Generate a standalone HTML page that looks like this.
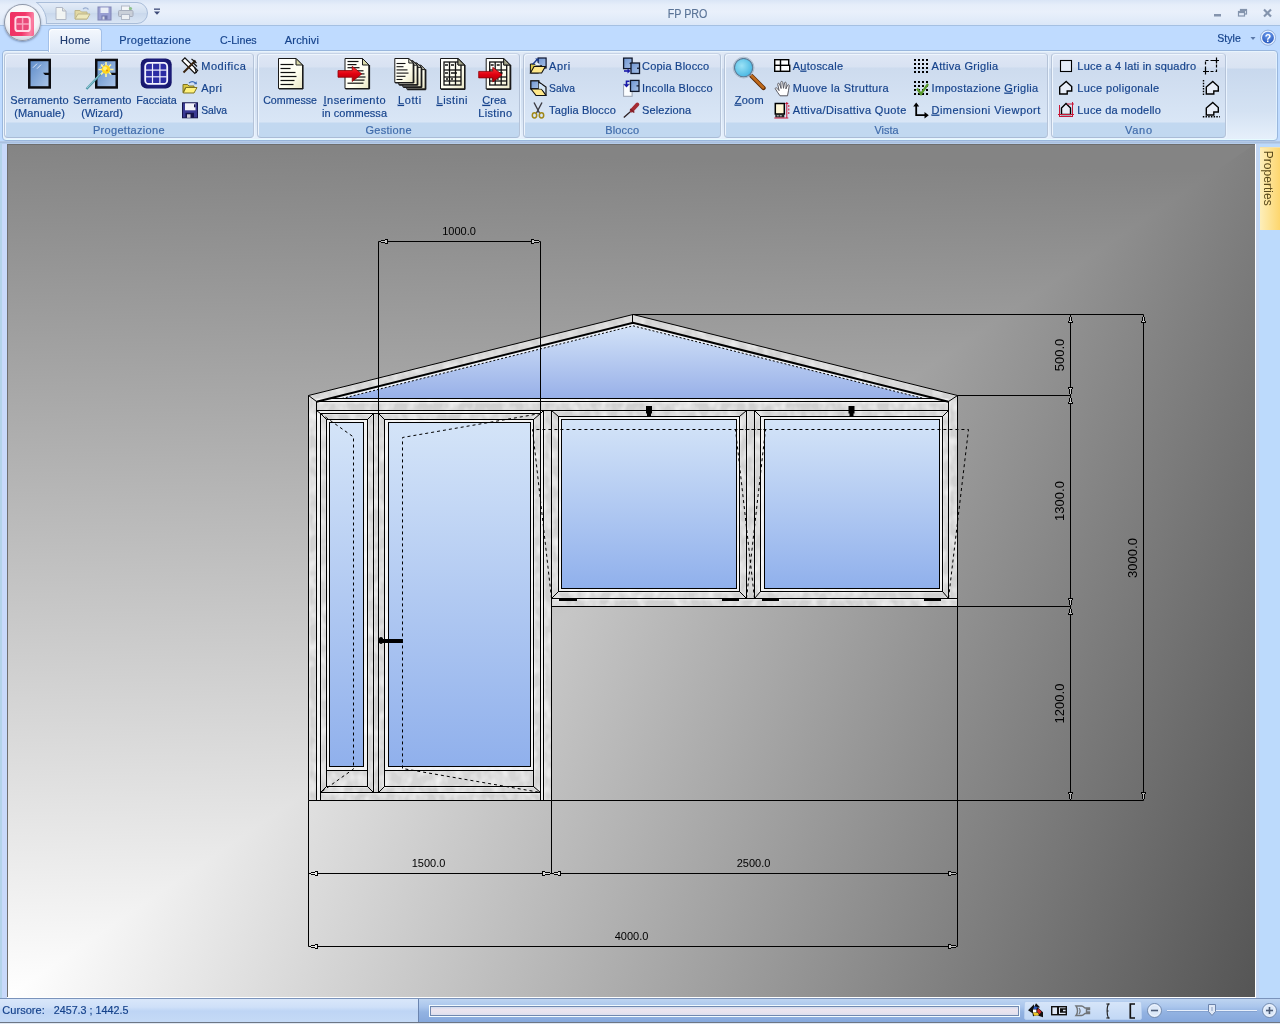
<!DOCTYPE html>
<html><head><meta charset="utf-8"><title>FP PRO</title>
<style>
html,body{margin:0;padding:0}
body{width:1280px;height:1024px;position:relative;overflow:hidden;background:#bfdbff;font-family:"Liberation Sans",sans-serif;font-size:11px;color:#15428b}
div{position:absolute;box-sizing:border-box}
#title{left:0;top:0;width:1280px;height:26px;background:linear-gradient(#d9e5f6 0,#e6eefa 5px,#e9f0fb 12px,#e1ebf9 20px,#dbe7f8 25px);border-bottom:1px solid #a5c0e2}
#tabrow{left:0;top:26px;width:1280px;height:25px;background:#bfdbff}
#qat{left:30px;top:2px;width:118px;height:22px;border:1px solid #a9bdd9;border-radius:0 11px 11px 0;background:linear-gradient(#e4ecf8,#d0deef 50%,#c9d8ec 51%,#d9e5f4)}
#qcw{left:22px;top:2px;width:40px;height:22px;overflow:hidden}
#qc{left:-24.8px;top:-4.8px;width:50px;height:50px;border-radius:50%;border:1px solid #a9bdd9;background:linear-gradient(#d9e5f6 3px,#e6eefa 8px,#e9f0fb 15px,#e1ebf9 23px,#dbe7f8 28px)}
#orb{left:4px;top:4px;width:36.5px;height:36.5px;border-radius:50%;background:radial-gradient(circle at 50% 35%,#ffffff 0,#f2f4f8 55%,#c9cfda 80%,#9aa3b3 100%);box-shadow:0 1px 2px rgba(60,80,120,.55), inset 0 0 0 1px #8e98aa}
#orbi{left:10px;top:12px;width:24px;height:23.6px;border-radius:1.5px;background:linear-gradient(100deg,#ee2f62 0,#f2386a 55%,#fb7fa2 85%,#f9628e 100%)}
#hometab{left:48px;top:28px;width:54px;height:24px;border:1px solid #a3c0e8;border-bottom:none;border-radius:4px 4px 0 0;background:linear-gradient(#f4f8fd,#e6eef9 60%,#dde7f5);box-shadow:inset 1px 1px 0 #fff}
#ribbon{left:2px;top:50px;width:1276px;height:91px;border:1px solid #9ab7dd;border-radius:4px;background:linear-gradient(#e3eefb 0,#dfe8f5 2px,#d9e3f2 17px,#c8d8ed 18px,#d4e2f3 60px,#e6f0fb 88px);box-shadow:inset 0 1px 0 #e8f4fd,inset 1px 0 0 #e8f4fd,inset -1px 0 0 #e0f0fd,inset 0 -1px 0 #e6fbff}
.grp{top:53px;height:85px;border:1px solid #b5c3d8;border-top-color:#c6d3e6;border-bottom-color:#a9bcd6;border-radius:4px;background:linear-gradient(#dfe7f5 0,#d8e2f2 13px,#cddbee 14px,#d9e6f6 68px,#c2d8f0 69px,#c1d8f0 84px);box-shadow:1px 1px 0 #eaf4ff,inset 1px 1px 0 #eef5fd}
#under{left:0;top:141px;width:1280px;height:3px;background:linear-gradient(#b9cde8,#a9c0e0 50%,#bdd3f0)}
#lside{left:0;top:144px;width:7px;height:854px;background:linear-gradient(90deg,#b3d3ea 0,#b3d3ea 2px,#c8d9fa 2px)}
#rside{left:1255px;top:144px;width:25px;height:854px;background:linear-gradient(90deg,#fff 0,#fff 1px,#c3d6f3 1px,#c3d6f3 4px,#bcdafc 4px)}
#prop{left:1260px;top:147px;width:20px;height:83px;background:linear-gradient(90deg,#fdeeba,#fde08c 60%,#fdd66e);border-top:1px solid #f6e2a8}
#cvbot{left:7px;top:997px;width:1249px;height:1px;background:#fff}
#status{left:0;top:998px;width:1280px;height:26px;border-top:1px solid #7a93bb;background:linear-gradient(#d9e7fa 0,#cfe0f8 8px,#bed5f5 12px,#c5daf6 23px,#6d7684 23px,#6d7684 24px,#dfe8f4 24px)}
#status2{left:418px;top:999px;width:862px;height:23px;background:linear-gradient(#bdd4f1 0,#a9c5ec 8px,#93b3e2 13px,#86a8dc 23px);border-left:1px solid #6b85b0}
#prog{left:429px;top:1005px;width:591px;height:12px;border:1px solid #f2fbff;background:linear-gradient(#c8d8ee,#ebe4ef 35%,#e6e2ee 70%,#d4dcee);box-shadow:inset 0 0 0 1px #7088b0}
#sicons{left:1024px;top:1001px;width:118px;height:19px;background:linear-gradient(#d6e5f9,#c2d8f5);border:1px solid #b5cdee;border-radius:2px}
</style></head><body>
<div id="title"></div><div id="tabrow"></div><div id="qat"></div>
<div id="ribbon"></div>
<div id="hometab"></div>
<div class="grp" style="left:4px;width:250px"></div>
<div class="grp" style="left:257px;width:263px"></div>
<div class="grp" style="left:523px;width:198px"></div>
<div class="grp" style="left:724px;width:324px"></div>
<div class="grp" style="left:1051px;width:175px"></div>
<div id="qcw"><div id="qc"></div></div><div id="orb"></div><div id="orbi"></div>
<div id="under"></div><div id="lside"></div><div id="rside"></div><div id="prop"></div>
<div id="cvbot"></div>
<div id="status"></div><div id="status2"></div><div id="prog"></div><div id="sicons"></div>
<svg id="cv" width="1280" height="1024" viewBox="0 0 1280 1024" style="position:absolute;left:0;top:0;will-change:transform">
<defs>
<linearGradient id="bgA" gradientUnits="userSpaceOnUse" x1="7" y1="144" x2="-11.9" y2="996.5"><stop offset="0" stop-color="#848484"/><stop offset="1" stop-color="#ffffff"/></linearGradient>
<linearGradient id="bgB" gradientUnits="userSpaceOnUse" x1="7" y1="997" x2="1104.7" y2="1403.2"><stop offset="0" stop-color="#ffffff"/><stop offset="1" stop-color="#555555"/></linearGradient>
<linearGradient id="gl" x1="0" y1="0" x2="0" y2="1"><stop offset="0" stop-color="#d4e4f8"/><stop offset="1" stop-color="#90b0ec"/></linearGradient>
<linearGradient id="glr" x1="0" y1="0" x2="0" y2="1"><stop offset="0" stop-color="#d2e2f8"/><stop offset="1" stop-color="#98b0e8"/></linearGradient>
<linearGradient id="fv" x1="0" y1="0" x2="1" y2="0"><stop offset="0" stop-color="#e8e8e8"/><stop offset=".35" stop-color="#d0d0d0"/><stop offset="1" stop-color="#d4d4d4"/></linearGradient>
<linearGradient id="fh" x1="0" y1="0" x2="0" y2="1"><stop offset="0" stop-color="#ececec"/><stop offset=".35" stop-color="#d0d0d0"/><stop offset="1" stop-color="#d3d3d3"/></linearGradient>
<filter id="tex" x="0" y="0" width="100%" height="100%" color-interpolation-filters="sRGB">
<feTurbulence type="fractalNoise" baseFrequency="0.11 0.08" numOctaves="2" seed="7" result="n"/>
<feColorMatrix in="n" type="matrix" values="0 0 0 0 1  0 0 0 0 1  0 0 0 0 1  1.35 0 0 0 -0.5" result="m"/>
<feComposite in="m" in2="SourceGraphic" operator="in" result="mm"/>
<feMerge><feMergeNode in="SourceGraphic"/><feMergeNode in="mm"/></feMerge>
</filter>
</defs>
<rect x="7" y="144" width="1248" height="853" fill="url(#bgA)" />
<polygon points="7,997 1255,144 1255,997" fill="url(#bgB)" />
<rect x="1255" y="144" width="1" height="854" fill="#fff" />
<rect x="7" y="997" width="1249" height="1" fill="#fff" />
<rect x="7" y="144" width="1248" height="1" fill="#6e6e6e" />
<rect x="7" y="144" width="1" height="853" fill="#6e6e6e" />
<g filter="url(#tex)">
<polygon points="308.5,395.5 633,314.5 957.5,395.5 948.5,401.5 633,322.5 316.5,401.5" fill="#d2d2d2" />
<polygon points="308.5,395.5 316.5,401.5 551.5,401.5 551.5,800.5 308.5,800.5" fill="#d2d2d2" />
<polygon points="551.5,401.5 948.5,401.5 957.5,395.5 957.5,606.5 551.5,606.5" fill="#d2d2d2" />
<rect x="316.5" y="398.5" width="632" height="3" fill="#f0f0f0" />
<rect x="316.5" y="401.5" width="632" height="9" fill="url(#fh)" />
<polygon points="308.5,395.5 316.5,401.5 316.5,800.5 308.5,800.5" fill="url(#fv)" />
<rect x="316.5" y="410.5" width="4" height="390" fill="#f0f0f0" />
<rect x="540.5" y="410.5" width="3" height="390" fill="#f0f0f0" />
<rect x="543.5" y="410.5" width="8" height="390" fill="url(#fv)" />
<polygon points="957.5,395.5 948.5,401.5 948.5,598.5 957.5,598.5" fill="url(#fv)" />
<rect x="320.5" y="410.5" width="220" height="3" fill="#f0f0f0" />
<rect x="320.5" y="792.5" width="220" height="8" fill="url(#fh)" />
<rect x="551.5" y="598.5" width="406" height="8" fill="url(#fh)" />
<rect x="320.5" y="413.5" width="53" height="379" fill="#d2d2d2" />
<rect x="320.5" y="413.5" width="6" height="379" fill="url(#fv)" />
<rect x="367.5" y="413.5" width="6" height="379" fill="url(#fv)" />
<polygon points="320.5,413.5 373.5,413.5 367.5,419.5 326.5,419.5" fill="url(#fh)" />
<polygon points="320.5,792.5 373.5,792.5 367.5,786.5 326.5,786.5" fill="url(#fh)" />
<rect x="326.5" y="419.5" width="41" height="351" fill="#f0f0f0" />
<rect x="326.5" y="770.5" width="41" height="16" fill="#d6d6d6" />
<rect x="373.5" y="413.5" width="5" height="379" fill="url(#fv)" />
<rect x="378.5" y="413.5" width="162" height="379" fill="#d2d2d2" />
<rect x="378.5" y="413.5" width="6" height="379" fill="url(#fv)" />
<rect x="533.5" y="413.5" width="7" height="379" fill="url(#fv)" />
<polygon points="378.5,413.5 540.5,413.5 533.5,419.5 384.5,419.5" fill="url(#fh)" />
<polygon points="378.5,792.5 540.5,792.5 533.5,786.5 384.5,786.5" fill="url(#fh)" />
<rect x="384.5" y="419.5" width="149" height="351" fill="#f0f0f0" />
<rect x="384.5" y="770.5" width="149" height="16" fill="#d6d6d6" />
<rect x="551.5" y="410.5" width="195" height="188" fill="#d2d2d2" />
<rect x="551.5" y="410.5" width="7" height="188" fill="url(#fv)" />
<rect x="739.5" y="410.5" width="7" height="188" fill="url(#fv)" />
<polygon points="551.5,410.5 746.5,410.5 739.5,416.5 558.5,416.5" fill="url(#fh)" />
<polygon points="551.5,598.5 746.5,598.5 739.5,591.5 558.5,591.5" fill="url(#fh)" />
<rect x="558.5" y="416.5" width="181" height="175" fill="#f0f0f0" />
<rect x="746.5" y="410.5" width="8" height="188" fill="url(#fv)" />
<rect x="754.5" y="410.5" width="194" height="188" fill="#d2d2d2" />
<rect x="754.5" y="410.5" width="6" height="188" fill="url(#fv)" />
<rect x="942.5" y="410.5" width="6" height="188" fill="url(#fv)" />
<polygon points="754.5,410.5 948.5,410.5 942.5,416.5 760.5,416.5" fill="url(#fh)" />
<polygon points="754.5,598.5 948.5,598.5 942.5,591.5 760.5,591.5" fill="url(#fh)" />
<rect x="760.5" y="416.5" width="182" height="175" fill="#f0f0f0" />
</g>
<polygon points="328.5,398.5 633,322.5 936.5,398.5" fill="#eef2f8" />
<polygon points="342,398.5 633,325.8 924,398.5" fill="url(#glr)" />
<rect x="329.5" y="422.5" width="34" height="344" fill="url(#gl)" />
<rect x="388.5" y="422.5" width="142" height="344" fill="url(#gl)" />
<rect x="561.5" y="419.5" width="175" height="169" fill="url(#gl)" />
<rect x="764.5" y="419.5" width="175" height="169" fill="url(#gl)" />
<g stroke="#000" stroke-width="1" fill="none">
<polyline points="308.5,395.5 633,314.5 957.5,395.5" />
<polyline points="316.5,401.8 633,322.8 948.5,401.8" stroke-width="2"/>
<line x1="632.5" y1="314.5" x2="632.5" y2="322.5" />
<line x1="308.5" y1="395.5" x2="316.5" y2="401.5" />
<line x1="957.5" y1="395.5" x2="948.5" y2="401.5" />
<polyline points="342,398.5 633,325.8 924,398.5" stroke-dasharray="2 2"/>
<line x1="330" y1="398.5" x2="935" y2="398.5" />
<line x1="316.5" y1="401.5" x2="948.5" y2="401.5" />
<line x1="316.5" y1="410.5" x2="948.5" y2="410.5" />
<line x1="308.5" y1="395.5" x2="308.5" y2="800.5" />
<line x1="316.5" y1="401.5" x2="316.5" y2="800.5" />
<line x1="320.5" y1="413.5" x2="320.5" y2="800.5" />
<line x1="316.5" y1="410.5" x2="320.5" y2="413.5" />
<line x1="543.5" y1="410.5" x2="540.5" y2="413.5" />
<line x1="320.5" y1="413.5" x2="540.5" y2="413.5" />
<line x1="540.5" y1="413.5" x2="540.5" y2="800.5" />
<line x1="543.5" y1="410.5" x2="543.5" y2="800.5" />
<line x1="551.5" y1="410.5" x2="551.5" y2="800.5" />
<line x1="948.5" y1="401.5" x2="948.5" y2="598.5" />
<line x1="957.5" y1="395.5" x2="957.5" y2="606.5" />
<line x1="308.5" y1="800.5" x2="551.5" y2="800.5" />
<line x1="320.5" y1="792.5" x2="540.5" y2="792.5" />
<line x1="551.5" y1="598.5" x2="957.5" y2="598.5" />
<line x1="551.5" y1="606.5" x2="957.5" y2="606.5" />
<rect x="320.5" y="413.5" width="53" height="379"/>
<rect x="326.5" y="419.5" width="41" height="367"/>
<rect x="329.5" y="422.5" width="34" height="344"/>
<line x1="326.5" y1="770.5" x2="367.5" y2="770.5" />
<line x1="320.5" y1="413.5" x2="326.5" y2="419.5" />
<line x1="373.5" y1="413.5" x2="367.5" y2="419.5" />
<line x1="320.5" y1="792.5" x2="326.5" y2="786.5" />
<line x1="373.5" y1="792.5" x2="367.5" y2="786.5" />
<rect x="378.5" y="413.5" width="162" height="379"/>
<rect x="384.5" y="419.5" width="149" height="367"/>
<rect x="388.5" y="422.5" width="142" height="344"/>
<line x1="384.5" y1="770.5" x2="533.5" y2="770.5" />
<line x1="378.5" y1="413.5" x2="384.5" y2="419.5" />
<line x1="540.5" y1="413.5" x2="533.5" y2="419.5" />
<line x1="378.5" y1="792.5" x2="384.5" y2="786.5" />
<line x1="540.5" y1="792.5" x2="533.5" y2="786.5" />
<rect x="551.5" y="410.5" width="195" height="188"/>
<rect x="558.5" y="416.5" width="181" height="175"/>
<rect x="561.5" y="419.5" width="175" height="169"/>
<line x1="551.5" y1="410.5" x2="558.5" y2="416.5" />
<line x1="746.5" y1="410.5" x2="739.5" y2="416.5" />
<line x1="551.5" y1="598.5" x2="558.5" y2="591.5" />
<line x1="746.5" y1="598.5" x2="739.5" y2="591.5" />
<rect x="754.5" y="410.5" width="194" height="188"/>
<rect x="760.5" y="416.5" width="182" height="175"/>
<rect x="764.5" y="419.5" width="175" height="169"/>
<line x1="754.5" y1="410.5" x2="760.5" y2="416.5" />
<line x1="948.5" y1="410.5" x2="942.5" y2="416.5" />
<line x1="754.5" y1="598.5" x2="760.5" y2="591.5" />
<line x1="948.5" y1="598.5" x2="942.5" y2="591.5" />
<polyline points="320.5,413.5 353.5,437 353.5,769 320.5,792.5" stroke-dasharray="3 3"/>
<polyline points="540.5,413.5 402.5,437.5 402.5,768.5 540.5,792.5" stroke-dasharray="3 3"/>
<polyline points="551.5,598.5 532.5,429.5 765.5,429.5 746.5,598.5" stroke-dasharray="3 3"/>
<polyline points="754.5,598.5 735.5,429.5 968.5,429.5 948.5,598.5" stroke-dasharray="3 3"/>
<line x1="378.5" y1="241.5" x2="378.5" y2="792.5" />
<line x1="540.5" y1="241.5" x2="540.5" y2="792.5" />
<line x1="378.5" y1="241.5" x2="540.5" y2="241.5" />
<line x1="308.5" y1="800.5" x2="308.5" y2="946.5" />
<line x1="551.5" y1="800.5" x2="551.5" y2="873.5" />
<line x1="957.5" y1="606.5" x2="957.5" y2="946.5" />
<line x1="308.5" y1="873.5" x2="957.5" y2="873.5" />
<line x1="308.5" y1="946.5" x2="957.5" y2="946.5" />
<line x1="633" y1="314.5" x2="1143.5" y2="314.5" />
<line x1="957.5" y1="395.5" x2="1070.5" y2="395.5" />
<line x1="957.5" y1="606.5" x2="1070.5" y2="606.5" />
<line x1="551.5" y1="800.5" x2="1143.5" y2="800.5" />
<line x1="1070.5" y1="314.5" x2="1070.5" y2="800.5" />
<line x1="1143.5" y1="314.5" x2="1143.5" y2="800.5" />
</g>
<g stroke="#000" stroke-width="1" shape-rendering="crispEdges">
<path fill="#c7c7c7" d="M380.5,240.5 L384.5,240.5 L385.5,239.5 L387.5,239.5 L387.5,243.5 L385.5,243.5 L384.5,242.5 L380.5,242.5"/>
<path fill="#c7c7c7" d="M538.5,240.5 L534.5,240.5 L533.5,239.5 L531.5,239.5 L531.5,243.5 L533.5,243.5 L534.5,242.5 L538.5,242.5"/>
<path fill="#ededed" d="M310.5,872.5 L314.5,872.5 L315.5,871.5 L317.5,871.5 L317.5,875.5 L315.5,875.5 L314.5,874.5 L310.5,874.5"/>
<path fill="#dddddd" d="M549.5,872.5 L545.5,872.5 L544.5,871.5 L542.5,871.5 L542.5,875.5 L544.5,875.5 L545.5,874.5 L549.5,874.5"/>
<path fill="#dddddd" d="M553.5,872.5 L557.5,872.5 L558.5,871.5 L560.5,871.5 L560.5,875.5 L558.5,875.5 L557.5,874.5 L553.5,874.5"/>
<path fill="#c1c1c1" d="M955.5,872.5 L951.5,872.5 L950.5,871.5 L948.5,871.5 L948.5,875.5 L950.5,875.5 L951.5,874.5 L955.5,874.5"/>
<path fill="#ebebeb" d="M310.5,945.5 L314.5,945.5 L315.5,944.5 L317.5,944.5 L317.5,948.5 L315.5,948.5 L314.5,947.5 L310.5,947.5"/>
<path fill="#bfbfbf" d="M955.5,945.5 L951.5,945.5 L950.5,944.5 L948.5,944.5 L948.5,948.5 L950.5,948.5 L951.5,947.5 L955.5,947.5"/>
<path fill="#c7c7c7" d="M1069.5,316.5 L1069.5,320.5 L1068.5,321.5 L1068.5,322.5 L1072.5,322.5 L1072.5,321.5 L1071.5,320.5 L1071.5,316.5"/>
<path fill="#c5c5c5" d="M1069.5,393.5 L1069.5,389.5 L1068.5,388.5 L1068.5,387.5 L1072.5,387.5 L1072.5,388.5 L1071.5,389.5 L1071.5,393.5"/>
<path fill="#c5c5c5" d="M1069.5,397.5 L1069.5,401.5 L1068.5,402.5 L1068.5,403.5 L1072.5,403.5 L1072.5,402.5 L1071.5,401.5 L1071.5,397.5"/>
<path fill="#c0c0c0" d="M1069.5,604.5 L1069.5,600.5 L1068.5,599.5 L1068.5,598.5 L1072.5,598.5 L1072.5,599.5 L1071.5,600.5 L1071.5,604.5"/>
<path fill="#c0c0c0" d="M1069.5,608.5 L1069.5,612.5 L1068.5,613.5 L1068.5,614.5 L1072.5,614.5 L1072.5,613.5 L1071.5,612.5 L1071.5,608.5"/>
<path fill="#bbbbbb" d="M1069.5,798.5 L1069.5,794.5 L1068.5,793.5 L1068.5,792.5 L1072.5,792.5 L1072.5,793.5 L1071.5,794.5 L1071.5,798.5"/>
<path fill="#c2c2c2" d="M1142.5,316.5 L1142.5,320.5 L1141.5,321.5 L1141.5,322.5 L1145.5,322.5 L1145.5,321.5 L1144.5,320.5 L1144.5,316.5"/>
<path fill="#b6b6b6" d="M1142.5,798.5 L1142.5,794.5 L1141.5,793.5 L1141.5,792.5 L1145.5,792.5 L1145.5,793.5 L1144.5,794.5 L1144.5,798.5"/>
</g>
<g fill="#000">
<rect x="559" y="599" width="18" height="2" fill="#000" />
<rect x="722" y="599" width="17" height="2" fill="#000" />
<rect x="762" y="599" width="17" height="2" fill="#000" />
<rect x="924" y="599" width="17" height="2" fill="#000" />
<rect x="646" y="406" width="6" height="7.5" fill="#000" />
<rect x="647" y="413" width="4" height="3" fill="#000" />
<rect x="848.5" y="406" width="6" height="7.5" fill="#000" />
<rect x="849.5" y="413" width="4" height="3" fill="#000" />
<rect x="379" y="639" width="24" height="4" fill="#000" />
<ellipse cx="381" cy="640.5" rx="2.2" ry="3.4"/>
</g>
<g font-family="Liberation Sans, sans-serif" fill="#000" font-size="11px" text-anchor="middle">
<text x="459" y="235">1000.0</text>
<text x="428.5" y="867">1500.0</text>
<text x="753.5" y="867">2500.0</text>
<text x="631.5" y="940">4000.0</text>
</g>
<g font-family="Liberation Sans, sans-serif" fill="#000" font-size="13px" text-anchor="middle">
<text transform="translate(1064,355) rotate(-90)">500.0</text>
<text transform="translate(1064,501) rotate(-90)">1300.0</text>
<text transform="translate(1064,703.5) rotate(-90)">1200.0</text>
<text transform="translate(1137,558) rotate(-90)">3000.0</text>
</g>
</svg>
<svg id="ch" width="1280" height="1024" viewBox="0 0 1280 1024" style="position:absolute;left:0;top:0;will-change:transform" font-family="Liberation Sans, sans-serif">
<defs>
<linearGradient id="wg" x1="0" y1="0" x2="1" y2="1"><stop offset="0" stop-color="#5f8cc9"/><stop offset="1" stop-color="#a9c4e8"/></linearGradient>
<linearGradient id="docg" x1="0" y1="0" x2="1" y2="1"><stop offset="0" stop-color="#ffffff"/><stop offset=".6" stop-color="#fffff0"/><stop offset="1" stop-color="#e9e6c4"/></linearGradient>
<radialGradient id="navy" cx=".5" cy=".5" r=".7"><stop offset="0" stop-color="#3434b4"/><stop offset="1" stop-color="#10105c"/></radialGradient>
<linearGradient id="redg" x1="0" y1="0" x2="0" y2="1"><stop offset="0" stop-color="#ff3a3a"/><stop offset=".5" stop-color="#e00010"/><stop offset="1" stop-color="#a80008"/></linearGradient>
<radialGradient id="lens" cx=".4" cy=".4" r=".7"><stop offset="0" stop-color="#9be2f6"/><stop offset="1" stop-color="#3fb2e0"/></radialGradient>
<linearGradient id="bw" x1="0" y1="0" x2="1" y2="1"><stop offset="0" stop-color="#6f95d2"/><stop offset="1" stop-color="#a6c0e6"/></linearGradient>
<radialGradient id="helpg" cx=".5" cy=".3" r=".8"><stop offset="0" stop-color="#6fa0f0"/><stop offset="1" stop-color="#1a48b0"/></radialGradient>
</defs>
<text x="667.7" y="18" font-size="12px" fill="#5c7598" stroke="#5c7598" stroke-width=".18" textLength="39.7" lengthAdjust="spacingAndGlyphs" >FP PRO</text>
<rect x="1214" y="14" width="7" height="2.5" fill="#8494ad"/>
<g fill="none" stroke="#8494ad" stroke-width="1.2"><rect x="1240.5" y="9.5" width="6" height="4.5"/><rect x="1238.5" y="11.5" width="6" height="4.5" fill="#e4ecf9"/><line x1="1238" y1="12.2" x2="1245" y2="12.2" stroke-width="1.8"/><line x1="1240" y1="10.2" x2="1247" y2="10.2" stroke-width="1.8"/></g>
<g stroke="#8494ad" stroke-width="2.2" stroke-linecap="butt"><line x1="1264" y1="9.5" x2="1271" y2="16.5"/><line x1="1271" y1="9.5" x2="1264" y2="16.5"/></g>
<g opacity=".8">
<g transform="translate(55.5,7)"><path d="M0.5,0.5 H7 L10.5,4 V12.5 H0.5 Z" fill="#fbfbf4" stroke="#a8aebc"/><path d="M7,0.5 V4 H10.5" fill="#e6e6d8" stroke="#a8aebc"/></g>
<g transform="translate(74,6.5)"><path d="M1,4 H6 L7.5,5.5 H13 V12.5 H1 Z" fill="#e8d890" stroke="#b8aa70"/><path d="M1,12.5 L4,7.5 H16 L13,12.5 Z" fill="#f6ecb0" stroke="#b8aa70"/><path d="M9,2.5 Q12,0 14.5,3" fill="none" stroke="#8aa0c8" stroke-width="1.2"/></g>
<g transform="translate(97.5,6.5)"><rect x="0.5" y="0.5" width="13" height="13" fill="#8c90cc" stroke="#6c70a8"/><rect x="3" y="1" width="8" height="5.5" fill="#eef0f8"/><rect x="4" y="9" width="6" height="4" fill="#5c609c"/><rect x="5" y="10" width="2" height="3" fill="#d8dae8"/></g>
<g transform="translate(118,5.5)"><rect x="3.5" y="0.5" width="8" height="5" fill="#fafafa" stroke="#a8aebc"/><rect x="0.5" y="5" width="14.5" height="6" rx="1" fill="#c8ccd4" stroke="#9ca2b0"/><rect x="3.5" y="9" width="8" height="5" fill="#f4f4f4" stroke="#a8aebc"/><circle cx="12.5" cy="3" r="1.6" fill="#7ab870"/></g>
</g>
<rect x="154" y="8.5" width="6" height="1.3" fill="#3c4a78"/><path d="M154,11.5 h6 l-3,3.3 z" fill="#3c4a78"/>
<rect x="16.4" y="18" width="12.6" height="12" fill="#ea4a7a"/><g fill="none"><rect x="15.4" y="17.1" width="14.4" height="13.9" rx="2.6" stroke="#ffdbe6" stroke-width="2"/><path d="M22.6,18 V30 M16.4,24 H29" stroke="#f9a4be" stroke-width="1.5"/></g>
<text x="60" y="43.7" font-size="11px" fill="#1e3a6e" stroke="#1e3a6e" stroke-width=".18" textLength="30.2" lengthAdjust="spacing" >Home</text>
<text x="119.2" y="43.7" font-size="11px" fill="#15428b" stroke="#15428b" stroke-width=".18" textLength="71.7" lengthAdjust="spacing" >Progettazione</text>
<text x="219.9" y="43.7" font-size="11px" fill="#15428b" stroke="#15428b" stroke-width=".18" textLength="36.8" lengthAdjust="spacingAndGlyphs" >C-Lines</text>
<text x="284.8" y="43.7" font-size="11px" fill="#15428b" stroke="#15428b" stroke-width=".18" textLength="34.1" lengthAdjust="spacing" >Archivi</text>
<text x="1217.3" y="41.5" font-size="11px" fill="#15428b" stroke="#15428b" stroke-width=".18" textLength="23.5" lengthAdjust="spacingAndGlyphs" >Style</text>
<path d="M1250.5,37 h5 l-2.5,3 z" fill="#5a78a8"/>
<circle cx="1268" cy="37.7" r="6.6" fill="url(#helpg)" stroke="#e8f2ff" stroke-width="1.4"/><circle cx="1268" cy="37.7" r="7.6" fill="none" stroke="#8aa4d0" stroke-width=".8"/>
<text x="1268" y="41.6" font-size="10.5px" font-weight="bold" fill="#fff" text-anchor="middle">?</text>
<g transform="translate(28,58.7)"><rect x="0" y="0" width="23" height="30" fill="#0c0c10"/><rect x="2.5" y="2.5" width="18" height="25" fill="url(#wg)"/><path d="M5,9 l4,-4 M9,10 l4,-4" stroke="#dce8f8" stroke-width="1"/><path d="M15,14 h8 v2.2 h-6 z" fill="#0c0c10"/></g>
<g transform="translate(95,58.7)"><rect x="0" y="0" width="23" height="30" fill="#0c0c10"/><rect x="2.5" y="2.5" width="18" height="25" fill="url(#wg)"/><path d="M5,9 l4,-4 M9,10 l4,-4" stroke="#dce8f8" stroke-width="1"/><path d="M15,14 h8 v2.2 h-6 z" fill="#0c0c10"/></g>
<line x1="86.5" y1="89" x2="102" y2="72.5" stroke="#4f98a8" stroke-width="2.2"/><line x1="87" y1="88" x2="102" y2="72" stroke="#a8dce4" stroke-width=".8"/>
<g stroke="#fff6a0" stroke-width="1.6"><line x1="106" y1="62" x2="106" y2="77"/><line x1="98.5" y1="69.5" x2="113.5" y2="69.5"/><line x1="101" y1="64.5" x2="111" y2="74.5"/><line x1="111" y1="64.5" x2="101" y2="74.5"/></g><circle cx="106" cy="69.5" r="4.2" fill="#ffd61a"/><circle cx="105" cy="68.5" r="2" fill="#fff07a"/><circle cx="107" cy="70.5" r="1" fill="#e08a10"/>
<text x="10.2" y="103.9" font-size="11px" fill="#15428b" stroke="#15428b" stroke-width=".18" textLength="58.3" lengthAdjust="spacing" >Serramento</text>
<text x="14.2" y="116.6" font-size="11px" fill="#15428b" stroke="#15428b" stroke-width=".18" textLength="50.8" lengthAdjust="spacing" >(Manuale)</text>
<text x="73.1" y="103.9" font-size="11px" fill="#15428b" stroke="#15428b" stroke-width=".18" textLength="58.3" lengthAdjust="spacing" >Serramento</text>
<text x="81.3" y="116.6" font-size="11px" fill="#15428b" stroke="#15428b" stroke-width=".18" textLength="41.6" lengthAdjust="spacing" >(Wizard)</text>
<g transform="translate(140.7,58.4)"><rect x="0" y="0" width="31" height="30" rx="6" fill="url(#navy)"/><rect x="4.5" y="4.5" width="22" height="21" rx="3.5" fill="#2c2ca4" stroke="#f4f4ff" stroke-width="1.8"/><g stroke="#f0f0ff" stroke-width="1.2"><line x1="11.8" y1="5" x2="11.8" y2="25"/><line x1="19.2" y1="5" x2="19.2" y2="25"/><line x1="5" y1="11.7" x2="26" y2="11.7"/><line x1="5" y1="18.4" x2="26" y2="18.4"/></g></g>
<text x="136.2" y="103.9" font-size="11px" fill="#15428b" stroke="#15428b" stroke-width=".18" textLength="40.6" lengthAdjust="spacingAndGlyphs" >Facciata</text>
<g transform="translate(182.5,58)"><g transform="rotate(45 7 8)"><rect x="-2" y="5.5" width="18" height="4" fill="#fff" stroke="#111" stroke-width="1.2"/></g><line x1="1" y1="14.5" x2="13" y2="2.5" stroke="#3a2410" stroke-width="2"/><path d="M9,1 l5,4 M11,5 l3.5,3.5 M12,9 l2,6" stroke="#111" stroke-width="1.1" fill="none"/></g>
<text x="201.2" y="69.8" font-size="11px" fill="#15428b" stroke="#15428b" stroke-width=".18" textLength="44.7" lengthAdjust="spacing" >Modifica</text>
<g transform="translate(182.5,81.5)"><path d="M0.5,3 H5 L6.5,4.5 H11.5 V6 H3 L0.5,11 Z" fill="#d9c640" stroke="#7f7420" stroke-width="1"/><path d="M0.8,11.5 L3.5,6 H14.5 L11.5,11.5 Z" fill="#fff27c" stroke="#7f7420" stroke-width="1"/><path d="M6.5,1.5 Q10,-1.5 13,1.8" fill="none" stroke="#3c6cb8" stroke-width="1.3"/><path d="M11.5,2.8 l3,0 l-0.6,-3 z" fill="#3c6cb8"/></g>
<text x="201.2" y="91.7" font-size="11px" fill="#15428b" stroke="#15428b" stroke-width=".18" textLength="20.8" lengthAdjust="spacing" >Apri</text>
<g transform="translate(182,102.3)"><rect x="0.5" y="0.5" width="15" height="15" fill="#3a3a94" stroke="#15154c"/><rect x="3" y="1" width="10.5" height="7" fill="#f2f2f8"/><rect x="12" y="2" width="1.5" height="3" fill="#15154c"/><rect x="3.5" y="10.5" width="8.5" height="5" fill="#15154c"/><rect x="5" y="12" width="3.5" height="3.5" fill="#d0d0d8"/></g>
<text x="201.2" y="113.5" font-size="11px" fill="#15428b" stroke="#15428b" stroke-width=".18" textLength="25.9" lengthAdjust="spacingAndGlyphs" >Salva</text>
<text x="92.9" y="133.8" font-size="11px" fill="#3e6aaa" stroke="#3e6aaa" stroke-width=".18" textLength="71.7" lengthAdjust="spacing" >Progettazione</text>
<g transform="translate(278,58)"><path d="M0.5,0.5 H18 L24.5,7 V30.5 H0.5 Z" fill="url(#docg)" stroke="#1a1a1a" stroke-width="1"/><path d="M24.8,7 V31 M1,30.8 H25" stroke="#1a1a1a" stroke-width="1.6" fill="none"/><path d="M18,0.5 V7 H24.5 Z" fill="#d9d9a8" stroke="#1a1a1a" stroke-width="1"/></g>
<g stroke="#111" stroke-width="1.2">
<line x1="280.5" y1="64.5" x2="293.5" y2="64.5"/>
<line x1="280.5" y1="68.5" x2="290.5" y2="68.5"/>
<line x1="280.5" y1="72.5" x2="295.5" y2="72.5"/>
<line x1="280.5" y1="76.5" x2="296.5" y2="76.5"/>
<line x1="280.5" y1="80.5" x2="294.5" y2="80.5"/>
<line x1="280.5" y1="84.5" x2="293.5" y2="84.5"/>
</g>
<text x="263.2" y="103.9" font-size="11px" fill="#15428b" stroke="#15428b" stroke-width=".18" textLength="53.8" lengthAdjust="spacingAndGlyphs" >Commesse</text>
<g transform="translate(344.5,58)"><path d="M0.5,0.5 H18 L24.5,7 V30.5 H0.5 Z" fill="url(#docg)" stroke="#1a1a1a" stroke-width="1"/><path d="M24.8,7 V31 M1,30.8 H25" stroke="#1a1a1a" stroke-width="1.6" fill="none"/><path d="M18,0.5 V7 H24.5 Z" fill="#d9d9a8" stroke="#1a1a1a" stroke-width="1"/></g>
<g stroke="#111" stroke-width="1.2">
<line x1="347.5" y1="61.5" x2="358.5" y2="61.5"/>
<line x1="347.5" y1="64.6" x2="356.5" y2="64.6"/>
<line x1="347.5" y1="67.7" x2="359.5" y2="67.7"/>
<line x1="356.5" y1="70.8" x2="363.5" y2="70.8"/>
<line x1="358.5" y1="73.9" x2="364.5" y2="73.9"/>
<line x1="356.5" y1="77" x2="365.5" y2="77"/>
<line x1="353.5" y1="80.1" x2="364.5" y2="80.1"/>
<line x1="347.5" y1="83.2" x2="363.5" y2="83.2"/>
</g>
<g transform="translate(338,66.3)"><path d="M0,4.256 H14.22 V0 L23.7,7.6 L14.22,15.2 V10.944 H0 Z" fill="url(#redg)" stroke="#8c0008" stroke-width=".8"/></g>
<text x="323.6" y="103.9" font-size="11px" fill="#15428b" stroke="#15428b" stroke-width=".18" textLength="61.9" lengthAdjust="spacing" ><tspan text-decoration="underline">I</tspan>nserimento</text>
<text x="322.1" y="116.6" font-size="11px" fill="#15428b" stroke="#15428b" stroke-width=".18" textLength="64.9" lengthAdjust="spacing" >in commessa</text>
<g transform="translate(406.3,64.6)"><path d="M0.5,0.5 H14.5 L19,5 V24.5 H0.5 Z" fill="url(#docg)" stroke="#1a1a1a" stroke-width="1"/><path d="M19.3,5 V25 M1,24.8 H19.5" stroke="#1a1a1a" stroke-width="1.6" fill="none"/><path d="M14.5,0.5 V5 H19 Z" fill="#eeeedc" stroke="#1a1a1a" stroke-width="1"/></g>
<g transform="translate(402.3,62.4)"><path d="M0.5,0.5 H14.5 L19,5 V24.5 H0.5 Z" fill="url(#docg)" stroke="#1a1a1a" stroke-width="1"/><path d="M19.3,5 V25 M1,24.8 H19.5" stroke="#1a1a1a" stroke-width="1.6" fill="none"/><path d="M14.5,0.5 V5 H19 Z" fill="#eeeedc" stroke="#1a1a1a" stroke-width="1"/></g>
<g transform="translate(398.3,60.2)"><path d="M0.5,0.5 H14.5 L19,5 V24.5 H0.5 Z" fill="url(#docg)" stroke="#1a1a1a" stroke-width="1"/><path d="M19.3,5 V25 M1,24.8 H19.5" stroke="#1a1a1a" stroke-width="1.6" fill="none"/><path d="M14.5,0.5 V5 H19 Z" fill="#eeeedc" stroke="#1a1a1a" stroke-width="1"/></g>
<g transform="translate(394.3,58)"><path d="M0.5,0.5 H14.5 L19,5 V24.5 H0.5 Z" fill="url(#docg)" stroke="#1a1a1a" stroke-width="1"/><path d="M19.3,5 V25 M1,24.8 H19.5" stroke="#1a1a1a" stroke-width="1.6" fill="none"/><path d="M14.5,0.5 V5 H19 Z" fill="#eeeedc" stroke="#1a1a1a" stroke-width="1"/></g>
<g stroke="#111" stroke-width="1.1">
<line x1="396.5" y1="63.5" x2="405.5" y2="63.5"/>
<line x1="396.5" y1="66.7" x2="403.5" y2="66.7"/>
<line x1="396.5" y1="69.9" x2="407.5" y2="69.9"/>
<line x1="396.5" y1="73.1" x2="408.5" y2="73.1"/>
<line x1="396.5" y1="76.3" x2="405.5" y2="76.3"/>
<line x1="396.5" y1="79.5" x2="402.5" y2="79.5"/>
</g>
<text x="397.9" y="103.9" font-size="11px" fill="#15428b" stroke="#15428b" stroke-width=".18" textLength="23.3" lengthAdjust="spacing" ><tspan text-decoration="underline">L</tspan>otti</text>
<g transform="translate(440,58)"><path d="M0.5,0.5 H18 L24.5,7 V31 H0.5 Z" fill="url(#docg)" stroke="#1a1a1a" stroke-width="1"/><path d="M24.8,7 V31.5 M1,31.3 H25" stroke="#1a1a1a" stroke-width="1.6" fill="none"/><path d="M18,0.5 V7 H24.5 Z" fill="#a4a488" stroke="#1a1a1a" stroke-width="1"/></g>
<g transform="translate(440,58)"><g stroke="#111" stroke-width="1.3" fill="none"><rect x="4" y="4" width="17" height="23"/><line x1="9.5" y1="4" x2="9.5" y2="27"/><line x1="15.5" y1="4" x2="15.5" y2="27"/><line x1="4" y1="12" x2="21" y2="12"/><line x1="4" y1="19" x2="21" y2="19"/><line x1="4" y1="23" x2="21" y2="23"/><path d="M5,7 h3 M11,7 h3 M5,15 h3 M11,15 h6 M6,21 h2 M11,21 h2"/></g><path d="M18,0.5 V7 H24.5 Z" fill="#a4a488" stroke="#1a1a1a"/></g>
<text x="436.6" y="103.9" font-size="11px" fill="#15428b" stroke="#15428b" stroke-width=".18" textLength="30.9" lengthAdjust="spacing" ><tspan text-decoration="underline">L</tspan>istini</text>
<g transform="translate(485.7,58)"><path d="M0.5,0.5 H18 L24.5,7 V31 H0.5 Z" fill="url(#docg)" stroke="#1a1a1a" stroke-width="1"/><path d="M24.8,7 V31.5 M1,31.3 H25" stroke="#1a1a1a" stroke-width="1.6" fill="none"/><path d="M18,0.5 V7 H24.5 Z" fill="#a4a488" stroke="#1a1a1a" stroke-width="1"/></g>
<g transform="translate(485.7,58)"><g stroke="#111" stroke-width="1.3" fill="none"><rect x="4" y="4" width="17" height="23"/><line x1="9.5" y1="4" x2="9.5" y2="27"/><line x1="15.5" y1="4" x2="15.5" y2="27"/><line x1="4" y1="12" x2="21" y2="12"/><line x1="4" y1="19" x2="21" y2="19"/><line x1="4" y1="23" x2="21" y2="23"/><path d="M5,7 h3 M11,7 h3 M5,15 h3 M11,15 h6 M6,21 h2 M11,21 h2"/></g><path d="M18,0.5 V7 H24.5 Z" fill="#a4a488" stroke="#1a1a1a"/></g>
<g transform="translate(478.7,67.3)"><path d="M0,4.116 H14.1 V0 L23.5,7.35 L14.1,14.7 V10.584 H0 Z" fill="url(#redg)" stroke="#8c0008" stroke-width=".8"/></g>
<text x="482.3" y="103.9" font-size="11px" fill="#15428b" stroke="#15428b" stroke-width=".18" textLength="23.9" lengthAdjust="spacing" ><tspan text-decoration="underline">C</tspan>rea</text>
<text x="478.2" y="116.6" font-size="11px" fill="#15428b" stroke="#15428b" stroke-width=".18" textLength="33.8" lengthAdjust="spacing" >Listino</text>
<text x="365.5" y="133.8" font-size="11px" fill="#3e6aaa" stroke="#3e6aaa" stroke-width=".18" textLength="46" lengthAdjust="spacing" >Gestione</text>
<g transform="translate(529.6,57.5)"><rect x="8.5" y="0.5" width="8" height="10" fill="url(#bw)" stroke="#0c1430" stroke-width="1.2"/><path d="M0.8,6.5 H5 L6,8 H12 L9,15.5 H0.8 Z" fill="#d8c850" stroke="#111" stroke-width="1"/><path d="M0.8,15.5 L4.5,9 H15.8 L12,15.5 Z" fill="#ffe88a" stroke="#111" stroke-width="1.1"/><path d="M3,7 L8,1.5" stroke="#1c3c8c" stroke-width="1.4"/><path d="M5.5,1 h3.5 v3.5 z" fill="#1c3c8c"/><path d="M5,8 l3,-3 l3,3 z" fill="#e8f4ff"/></g>
<text x="549.1" y="69.6" font-size="11px" fill="#15428b" stroke="#15428b" stroke-width=".18" textLength="21" lengthAdjust="spacing" >Apri</text>
<g transform="translate(530,80)"><rect x="0.8" y="0.8" width="8" height="8" fill="url(#bw)" stroke="#111" stroke-width="1.3"/><path d="M8.8,2 L16,7 V15 " fill="none" stroke="#111" stroke-width="1.2"/><path d="M1,9 L6,15.5 H16 L11.5,9 Z" fill="#ffe88a" stroke="#111" stroke-width="1.2"/><path d="M8.8,3 L15,8 v4 l-3.5,-3.2 H8.8 Z" fill="#d8e8f4"/><circle cx="10.5" cy="5.8" r="1.6" fill="#cfe6ff"/></g>
<text x="549.1" y="91.6" font-size="11px" fill="#15428b" stroke="#15428b" stroke-width=".18" textLength="25.9" lengthAdjust="spacingAndGlyphs" >Salva</text>
<g transform="translate(530,102)"><path d="M4,0.5 L9.5,11 M12,0.5 L6.5,11" stroke="#3c3c44" stroke-width="1.4" fill="none"/><ellipse cx="4.5" cy="13.3" rx="2.2" ry="2.6" fill="none" stroke="#a08818" stroke-width="1.5"/><ellipse cx="11.5" cy="13.3" rx="2.2" ry="2.6" fill="none" stroke="#a08818" stroke-width="1.5"/></g>
<text x="549.1" y="113.7" font-size="11px" fill="#15428b" stroke="#15428b" stroke-width=".18" textLength="66.7" lengthAdjust="spacing" >Taglia Blocco</text>
<g transform="translate(623,57.5)"><rect x="0.6" y="0.6" width="8.5" height="10.5" fill="url(#bw)" stroke="#10182c" stroke-width="1.3"/><path d="M9.1,5.85 h-2.5" stroke="#10182c" stroke-width="1.2"/><rect x="8" y="5.5" width="8.5" height="10.5" fill="url(#bw)" stroke="#10182c" stroke-width="1.3"/><path d="M16.5,10.75 h-2.5" stroke="#10182c" stroke-width="1.2"/><path d="M1,13.5 h5" stroke="#1818a8" stroke-width="1.6"/><path d="M4.5,11 l3,2.5 l-3,2.5 z" fill="#1818a8"/></g>
<text x="642" y="69.6" font-size="11px" fill="#15428b" stroke="#15428b" stroke-width=".18" textLength="67.2" lengthAdjust="spacing" >Copia Blocco</text>
<g transform="translate(623,79.8)"><rect x="0.6" y="4.5" width="8.5" height="12" fill="#fbfdff" stroke="#98a0b0" stroke-width="1"/><rect x="7.5" y="0.6" width="8.5" height="11" fill="url(#bw)" stroke="#10182c" stroke-width="1.3"/><path d="M16,6.1 h-2.5" stroke="#10182c" stroke-width="1.2"/><path d="M6.5,1.5 h-3 v4" stroke="#1818a8" stroke-width="1.6" fill="none"/><path d="M0.5,4.5 h6 l-3,3.2 z" fill="#1818a8"/></g>
<text x="642" y="91.6" font-size="11px" fill="#15428b" stroke="#15428b" stroke-width=".18" textLength="70.7" lengthAdjust="spacing" >Incolla Blocco</text>
<g transform="translate(623.3,102)"><line x1="0.5" y1="15.5" x2="9" y2="8" stroke="#2c2024" stroke-width="1.3"/><line x1="8.5" y1="8.5" x2="14" y2="2.5" stroke="#a42c34" stroke-width="4" stroke-linecap="round"/><line x1="7" y1="7" x2="11" y2="10.5" stroke="#7c2028" stroke-width="1.6"/></g>
<text x="642" y="113.7" font-size="11px" fill="#15428b" stroke="#15428b" stroke-width=".18" textLength="49.1" lengthAdjust="spacing" >Seleziona</text>
<text x="605.2" y="133.8" font-size="11px" fill="#3e6aaa" stroke="#3e6aaa" stroke-width=".18" textLength="33.8" lengthAdjust="spacing" >Blocco</text>
<line x1="751.5" y1="76" x2="763.5" y2="88" stroke="#5c2c08" stroke-width="4.4" stroke-linecap="round"/><line x1="751.8" y1="76" x2="763.2" y2="87.5" stroke="#c06a1c" stroke-width="2.6" stroke-linecap="round"/>
<circle cx="743.6" cy="67.6" r="9.2" fill="url(#lens)" stroke="#5c7c98" stroke-width="1.3"/><circle cx="743.6" cy="67.6" r="10.4" fill="none" stroke="#a8b8c8" stroke-width=".9"/>
<text x="734.7" y="103.7" font-size="11px" fill="#15428b" stroke="#15428b" stroke-width=".18" textLength="29" lengthAdjust="spacing" ><tspan text-decoration="underline">Z</tspan>oom</text>
<g transform="translate(774,59)"><rect x="0.7" y="0.7" width="14" height="6" fill="#fff" stroke="#000" stroke-width="1.4"/><rect x="0.7" y="6.3" width="15" height="6" fill="#fff" stroke="#000" stroke-width="1.4"/><line x1="6.5" y1="0.7" x2="6.5" y2="12.3" stroke="#000" stroke-width="1.4"/></g>
<text x="792.8" y="69.7" font-size="11px" fill="#15428b" stroke="#15428b" stroke-width=".18" textLength="50.2" lengthAdjust="spacing" >A<tspan text-decoration="underline">u</tspan>toscale</text>
<g transform="translate(774.5,80.3)"><path d="M5.5,15.5 C4,13 2,11 0.8,8.5 C0.5,7.5 1.8,7 2.6,8 L4.6,10.3 L3.2,4 C3,2.8 4.6,2.5 5,3.6 L6.6,8.2 L6.3,2 C6.3,0.8 8,0.8 8.2,2 L9,8 L10,2.6 C10.2,1.5 11.8,1.7 11.7,2.9 L11.4,8.6 L13,5 C13.5,4 15,4.4 14.7,5.6 C14,9 14,12 13,15.5 Z" fill="#fff" stroke="#585860" stroke-width="1"/></g>
<text x="792.8" y="91.7" font-size="11px" fill="#15428b" stroke="#15428b" stroke-width=".18" textLength="95.9" lengthAdjust="spacing" >Muove la Struttura</text>
<g transform="translate(774.3,102)"><rect x="1" y="1.5" width="9" height="10.5" fill="#fff8d8" stroke="#000" stroke-width="1.5"/><rect x="1" y="12" width="9" height="3.5" fill="#222"/><path d="M2.5,13.8 h2 M5.5,13.8 h2" stroke="#ddd" stroke-width="1"/><g stroke="#c81838" stroke-width="1"><line x1="12.5" y1="0" x2="12.5" y2="16"/><line x1="0" y1="16" x2="14" y2="16"/><line x1="14.5" y1="3" x2="14.5" y2="12" stroke-dasharray="2 1.5"/><line x1="11" y1="1.5" x2="14" y2="1.5"/></g></g>
<text x="792.8" y="113.7" font-size="11px" fill="#15428b" stroke="#15428b" stroke-width=".18" textLength="113.5" lengthAdjust="spacing" >Attiva/Disattiva Quote</text>
<g fill="#000"><rect x="914" y="59" width="2" height="2"/><rect x="914" y="63" width="2" height="2"/><rect x="914" y="67" width="2" height="2"/><rect x="914" y="71" width="2" height="2"/><rect x="918" y="59" width="2" height="2"/><rect x="918" y="63" width="2" height="2"/><rect x="918" y="67" width="2" height="2"/><rect x="918" y="71" width="2" height="2"/><rect x="922" y="59" width="2" height="2"/><rect x="922" y="63" width="2" height="2"/><rect x="922" y="67" width="2" height="2"/><rect x="922" y="71" width="2" height="2"/><rect x="926" y="59" width="2" height="2"/><rect x="926" y="63" width="2" height="2"/><rect x="926" y="67" width="2" height="2"/><rect x="926" y="71" width="2" height="2"/></g>
<text x="931.5" y="69.7" font-size="11px" fill="#15428b" stroke="#15428b" stroke-width=".18" textLength="66.7" lengthAdjust="spacing" >Attiva Griglia</text>
<g fill="#000"><rect x="914" y="81" width="2" height="2"/><rect x="914" y="85" width="2" height="2"/><rect x="914" y="89" width="2" height="2"/><rect x="914" y="93" width="2" height="2"/><rect x="918" y="81" width="2" height="2"/><rect x="918" y="85" width="2" height="2"/><rect x="918" y="89" width="2" height="2"/><rect x="918" y="93" width="2" height="2"/><rect x="922" y="81" width="2" height="2"/><rect x="922" y="85" width="2" height="2"/><rect x="922" y="89" width="2" height="2"/><rect x="922" y="93" width="2" height="2"/><rect x="926" y="81" width="2" height="2"/><rect x="926" y="85" width="2" height="2"/><rect x="926" y="89" width="2" height="2"/><rect x="926" y="93" width="2" height="2"/></g>
<path d="M917,88.5 L921,94 L928,84" fill="none" stroke="#5a9a2c" stroke-width="2.2"/>
<text x="931.5" y="91.7" font-size="11px" fill="#15428b" stroke="#15428b" stroke-width=".18" textLength="106.7" lengthAdjust="spacing" >Impostazione <tspan text-decoration="underline">G</tspan>riglia</text>
<path d="M916.2,104 V115.2 H927" fill="none" stroke="#000" stroke-width="1.8"/><path d="M913.2,106.5 L916.2,102.5 L919.2,106.5 Z M924.5,112 L928.8,115.2 L924.5,118.4 Z" fill="#000"/>
<text x="931.5" y="113.7" font-size="11px" fill="#15428b" stroke="#15428b" stroke-width=".18" textLength="108.8" lengthAdjust="spacing" ><tspan text-decoration="underline">D</tspan>imensioni Viewport</text>
<text x="874.5" y="133.8" font-size="11px" fill="#3e6aaa" stroke="#3e6aaa" stroke-width=".18" textLength="24" lengthAdjust="spacingAndGlyphs" >Vista</text>
<rect x="1060.5" y="60.5" width="11" height="11" fill="#e4ecf8" stroke="#000" stroke-width="1.1"/>
<text x="1077.3" y="69.7" font-size="11px" fill="#15428b" stroke="#15428b" stroke-width=".18" textLength="118.7" lengthAdjust="spacing" >Luce a 4 lati in squadro</text>
<g transform="translate(1059.2,81)"><path d="M7,0.5 L12.5,5.5 V10 H8 V13 H0.5 V6 Z" fill="#e8eef8" stroke="#000" stroke-width="1.4"/></g>
<text x="1077.3" y="91.7" font-size="11px" fill="#15428b" stroke="#15428b" stroke-width=".18" textLength="81.9" lengthAdjust="spacing" >Luce poligonale</text>
<g transform="translate(1059,102)"><path d="M7,1.5 L11.5,6 V12.5 H2.5 V6 Z" fill="#e8eef8" stroke="#000" stroke-width="1.4"/><g stroke="#c81838" stroke-width="1" fill="none"><line x1="0.5" y1="3" x2="0.5" y2="14"/><line x1="13.5" y1="0" x2="13.5" y2="14.5"/><line x1="8" y1="2" x2="15" y2="2"/><line x1="-1" y1="12.5" x2="15" y2="12.5"/><line x1="0" y1="14.5" x2="14" y2="14.5"/></g></g>
<text x="1077.3" y="113.7" font-size="11px" fill="#15428b" stroke="#15428b" stroke-width=".18" textLength="83.5" lengthAdjust="spacing" >Luce da modello</text>
<g stroke="#000" stroke-width="1.2" fill="none"><rect x="1205.5" y="60.5" width="11" height="11" stroke-dasharray="3 2"/><path d="M1213,60.5 h6 M1216.5,57.5 v6 M1203,71.5 h6 M1205.5,68.5 v6"/></g>
<g transform="translate(1205.8,81)"><path d="M7,0.5 L12.5,5.5 V10 H8 V13 H0.5 V6 Z" fill="#e8eef8" stroke="#000" stroke-width="1.4"/><line x1="-2.3" y1="-1" x2="-2.3" y2="15" stroke="#000" stroke-width="1.4" stroke-dasharray="1.5 1.2"/></g>
<g transform="translate(1205.8,102)"><path d="M7,0.5 L12.5,5.5 V10 H8 V13 H0.5 V6 Z" fill="#e8eef8" stroke="#000" stroke-width="1.4"/><line x1="-3" y1="14.8" x2="14" y2="14.8" stroke="#000" stroke-width="1.4" stroke-dasharray="1.5 1.2"/></g>
<text x="1125" y="133.8" font-size="11px" fill="#3e6aaa" stroke="#3e6aaa" stroke-width=".18" textLength="27" lengthAdjust="spacing" >Vano</text>
<text transform="translate(1263.6,150.7) rotate(90)" font-size="12px" fill="#5a4a1c" textLength="55" lengthAdjust="spacing">Properties</text>
<text x="2.3" y="1013.7" font-size="11px" fill="#15428b" stroke="#15428b" stroke-width=".18" textLength="42.5" lengthAdjust="spacing" >Cursore:</text>
<text x="53.7" y="1013.7" font-size="11px" fill="#15428b" stroke="#15428b" stroke-width=".18" textLength="74.8" lengthAdjust="spacingAndGlyphs" >2457.3 ; 1442.5</text>
<g transform="translate(1028,1003.3)"><path d="M0,7 L6,1 V4 L8,0 L12,4 L10,4.5 L15,9 V14 L9,12 L5,13 L4.5,10 Z" fill="#111"/><path d="M6.5,3 L10,4 L8,6 L5,6 Z" fill="#2c58c0"/><path d="M10,5 l3.5,3.5 l-2,2.5 l-2.5,-3 z" fill="#d02828"/><path d="M5,9 L10,9.5 L11,12 L6,12.5 Z" fill="#f0c828"/><rect x="5" y="6.2" width="3.4" height="2.8" fill="#fff"/></g>
<g transform="translate(1051,1006)"><rect x="0.7" y="0.7" width="14.6" height="8" fill="#dfe8f6" stroke="#111" stroke-width="1.4"/><rect x="6" y="1" width="2" height="7.5" fill="#111"/><path d="M9,3 h6 M9,6 h6 M9,4.5 h3" stroke="#111" stroke-width="1.3"/></g>
<g transform="translate(1075.5,1005)"><path d="M0.5,1 H6 C8,1 9,3 9.5,3 H14 V4.5 H11 V7 H14 V8.5 H9.5 C9,8.5 8,10.5 6,10.5 H0.5 C2.5,8 2.5,3.5 0.5,1 Z" fill="none" stroke="#707478" stroke-width="1.4"/><path d="M3.5,3 C5,5 5,7 3.5,9" fill="none" stroke="#707478" stroke-width="1.2"/></g>
<path d="M1109,1003.5 C1106.5,1006 1106.5,1016 1109,1018.5 M1106.3,1004 h3.5 M1106.3,1018 h3.5 M1106.6,1011 h2" fill="none" stroke="#222" stroke-width="1.2"/>
<path d="M1135,1004 H1130.3 V1018 H1135" fill="none" stroke="#111" stroke-width="1.7"/>
<circle cx="1154.5" cy="1010.5" r="7" fill="#dce8f8" stroke="#7088ac" stroke-width="1"/><circle cx="1154.5" cy="1010.5" r="5.6" fill="none" stroke="#f4f8ff" stroke-width=".8"/><rect x="1151" y="1009.7" width="7" height="1.6" fill="#4c5c78"/>
<circle cx="1269.5" cy="1010.5" r="7" fill="#dce8f8" stroke="#7088ac" stroke-width="1"/><circle cx="1269.5" cy="1010.5" r="5.6" fill="none" stroke="#f4f8ff" stroke-width=".8"/><rect x="1266" y="1009.7" width="7" height="1.6" fill="#4c5c78"/><rect x="1268.7" y="1007" width="1.6" height="7" fill="#4c5c78"/>
<rect x="1167" y="1010" width="90" height="1" fill="#e8f0fc"/><rect x="1167" y="1011" width="90" height="1" fill="#7c98c4" opacity=".6"/>
<path d="M1208.5,1004.5 h7 v7 l-3.5,4 l-3.5,-4 z" fill="#dfe8f6" stroke="#6c84ac" stroke-width="1"/><line x1="1212" y1="1007" x2="1212" y2="1011" stroke="#8ca0c4" stroke-width="1"/>
</svg>
</body></html>
